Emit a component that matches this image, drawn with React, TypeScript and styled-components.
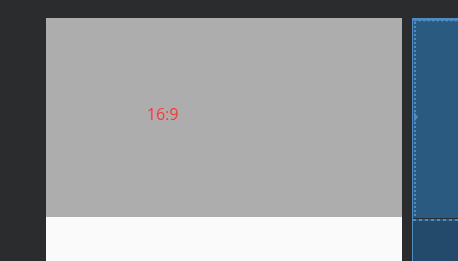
import React from 'react';
import styled, { createGlobalStyle } from 'styled-components';

const GlobalStyle = createGlobalStyle`
  html, body {
    margin: 0;
    padding: 0;
    height: 100%;
    overflow: hidden;
    background: #2b2c2e;
    font-family: "Open Sans", "Noto Sans", sans-serif;
  }
`;

const ScPage = styled.div`
  display: flex;
  gap: 10px;
  height: 261px;
  padding: 18px 0 0 46px;
  box-sizing: border-box;
  overflow: hidden;
`;

const ScColumn = styled.div`
  display: flex;
  flex-direction: column;
  width: 356px;
  flex: none;
`;

const ScStage = styled.div`
  height: 199px;
  background: #adadad;
  box-sizing: border-box;
  padding: 85px 0 0 101px;
`;

const ScRatio = styled.span`
  color: #f23c3c;
  font-size: 16px;
  line-height: 18px;
`;

const ScSheet = styled.div`
  flex: 1;
  background: #fafafa;
`;

const ScTrack = styled.div`
  flex: 1;
  display: flex;
  flex-direction: column;
  border-left: 1px solid #4f8cc4;
`;

const ScClip = styled.div`
  position: relative;
  height: 200px;
  background: #2b5a80;
  background-image: repeating-linear-gradient(
    to bottom,
    #4f8cc4 0 2px,
    transparent 2px 4px
  );
  background-size: 2px 100%;
  background-repeat: no-repeat;
  background-position: 1px 0;
`;

const ScWave = styled.svg`
  display: block;
  width: 100%;
  height: 5px;
`;

const ScHandle = styled.div`
  position: absolute;
  left: 1px;
  top: 94px;
  width: 0;
  height: 0;
  border-top: 5px solid transparent;
  border-bottom: 5px solid transparent;
  border-left: 4px solid #4f8cc4;
`;

const ScDash = styled.div`
  height: 2px;
  margin-top: 1px;
  background: #2b5a80;
  background-image: repeating-linear-gradient(
    to right,
    #4f8cc4 0 3px,
    #2b5a80 3px 6px
  );
`;

const ScRest = styled.div`
  flex: 1;
  background: #234a6a;
`;

function Wave(): JSX.Element {
  const bumps = [];
  for (let i = 0; i < 11; i++) {
    const x = i * 4.5;
    bumps.push(`M${x} 0 L${x + 4.5} 0 L${x + 4.5} 2 Q${x + 2.25} 5 ${x} 2 Z`);
  }
  return (
    <ScWave viewBox="0 0 45 5" preserveAspectRatio="none">
      <path d={bumps.join(' ')} fill="#4f8cc4" />
    </ScWave>
  );
}

export default function App(): JSX.Element {
  return <>
    <GlobalStyle />
    <ScPage>
      <ScColumn>
        <ScStage>
          <ScRatio>16:9</ScRatio>
        </ScStage>
        <ScSheet />
      </ScColumn>
      <ScTrack>
        <ScClip>
          <Wave />
          <ScHandle />
        </ScClip>
        <ScDash />
        <ScRest />
      </ScTrack>
    </ScPage>
  </>;
}
